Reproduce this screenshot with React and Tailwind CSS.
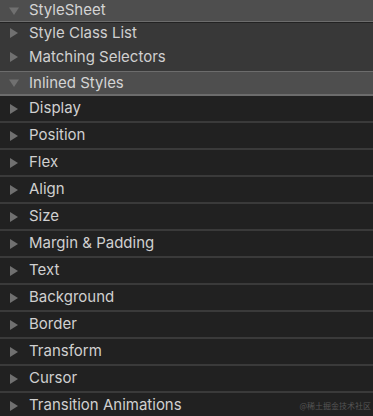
const Arrow = ({ open }) => (
  <svg width="12" height="12" viewBox="0 0 12 12" className="shrink-0">
    {open ? (
      <polygon points="1,2.5 11,2.5 6,10" fill="#707070" />
    ) : (
      <polygon points="2,1 10,6 2,11" fill="#707070" />
    )}
  </svg>
)

const Header = ({ label }) => (
  <div className="h-[22px] bg-[#4e4e4e] flex items-center pl-[8px] gap-[9px] text-[15px] text-[#d4d4d4] border-b border-[#6c6c6c]">
    <Arrow open />
    <span>{label}</span>
  </div>
)

const SubRow = ({ label }) => (
  <div className="h-6 flex items-center pl-[8px] gap-[9px] text-[15px] text-[#d0d0d0]">
    <Arrow />
    <span>{label}</span>
  </div>
)

const items = [
  "Display",
  "Position",
  "Flex",
  "Align",
  "Size",
  "Margin & Padding",
  "Text",
  "Background",
  "Border",
  "Transform",
  "Cursor",
  "Transition Animations",
]

export default function App() {
  return (
    <div
      className="relative w-[373px] h-[416px] overflow-hidden bg-[#222222]"
      style={{ fontFamily: "Inter, 'Noto Sans', sans-serif" }}
    >
      <div className="h-[23px]">
        <Header label="StyleSheet" />
      </div>
      <div className="bg-[#383838] h-[49px] flex flex-col border-b border-[#6c6c6c]">
        <div className="-mt-[2px]">
          <SubRow label="Style Class List" />
          <SubRow label="Matching Selectors" />
        </div>
      </div>
      <div className="h-[24px] bg-[#4e4e4e] flex items-center pl-[8px] gap-[9px] text-[15px] text-[#d4d4d4] border-b-2 border-[#6c6c6c]">
        <Arrow open />
        <span>Inlined Styles</span>
      </div>
      <div className="flex flex-col">
        {items.map((it) => (
          <div
            key={it}
            className="h-[27px] flex items-center pl-[8px] gap-[9px] text-[15px] text-[#d0d0d0] border-b-2 border-[#3a3a3a] bg-[#212121]"
          >
            <Arrow />
            <span>{it}</span>
          </div>
        ))}
      </div>
      <div
        className="absolute right-[2px] bottom-[4px] text-[8px] text-[#555555]"
        style={{ fontFamily: "'Noto Sans CJK SC', sans-serif" }}
      >
        @稀土掘金技术社区
      </div>
    </div>
  )
}
